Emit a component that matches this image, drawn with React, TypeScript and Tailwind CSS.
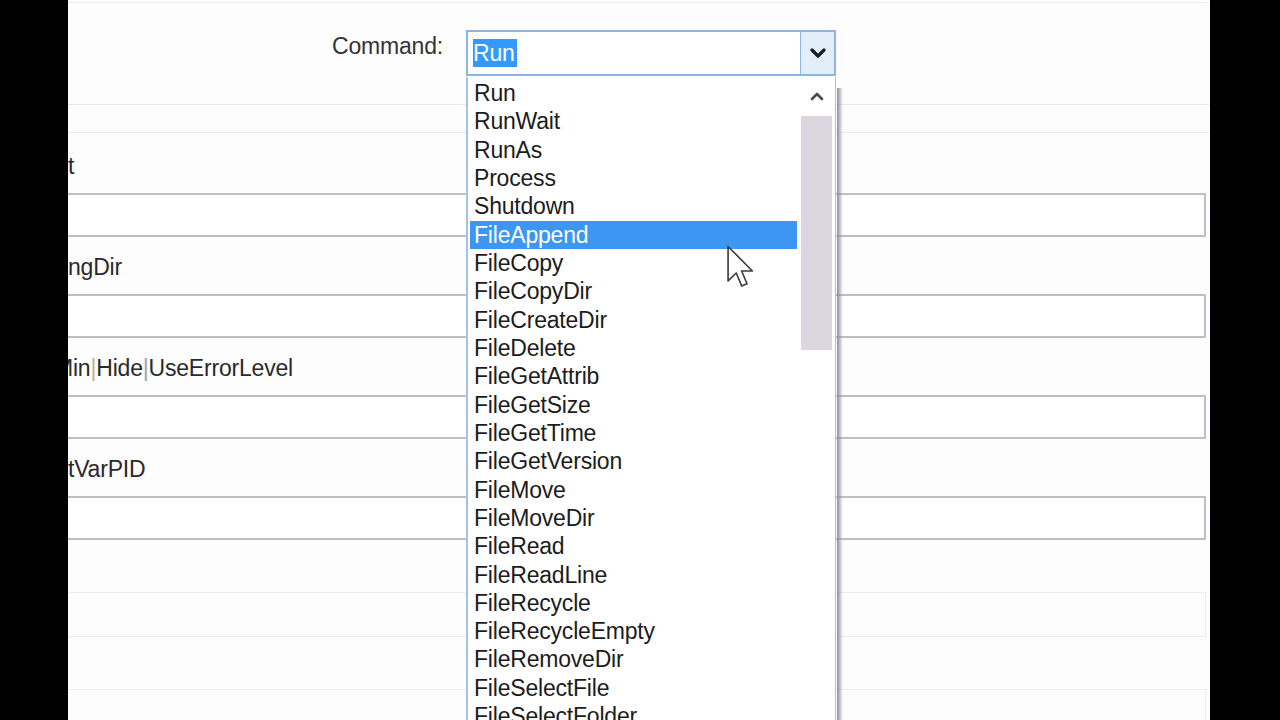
import React from 'react';

const COMMANDS = [
  'Run',
  'RunWait',
  'RunAs',
  'Process',
  'Shutdown',
  'FileAppend',
  'FileCopy',
  'FileCopyDir',
  'FileCreateDir',
  'FileDelete',
  'FileGetAttrib',
  'FileGetSize',
  'FileGetTime',
  'FileGetVersion',
  'FileMove',
  'FileMoveDir',
  'FileRead',
  'FileReadLine',
  'FileRecycle',
  'FileRecycleEmpty',
  'FileRemoveDir',
  'FileSelectFile',
  'FileSelectFolder',
  'FileSetAttrib',
];

const SELECTED = 'FileAppend';

// parameter rows behind the dropdown, left side is cut off by the frame
const ParamRow: React.FC<{ label: React.ReactNode; faint?: boolean }> = ({ label, faint }) => (
  <div className="flex flex-col shrink-0">
    <div className={`flex items-center pt-[3px] text-[23px] text-[#2a2a2a] tracking-[-0.2px] whitespace-nowrap shrink-0 ${faint ? 'h-[52px]' : 'h-[57px]'}`}>
      {label}
    </div>
    {faint ? (
      <div className="h-[45px] shrink-0 -ml-1 mr-1 border border-[#efe9f1]" />
    ) : (
      <div className="h-[44px] shrink-0 -ml-1 mr-1 border-2 border-[#c1bdc6] bg-white" />
    )}
  </div>
);

const ChevronDown = () => (
  <svg width="16" height="11" viewBox="0 0 16 11">
    <path d="M2 2 L8 8 L14 2" fill="none" stroke="#1b1b1f" strokeWidth="3.2" strokeLinecap="round" strokeLinejoin="round" />
  </svg>
);

const ChevronUp = () => (
  <svg width="14" height="9" viewBox="0 0 14 9">
    <path d="M2 7 L7 2 L12 7" fill="none" stroke="#4a4a50" strokeWidth="2.6" strokeLinecap="round" strokeLinejoin="round" />
  </svg>
);

const Cursor = () => (
  <svg width="28" height="46" viewBox="0 0 13 21" className="absolute left-[659px] top-[245px]">
    <path
      d="M0.5 0.5 L0.5 16.5 L4.3 12.8 L6.8 18.8 L9.3 17.8 L6.8 11.9 L11.8 11.9 Z"
      fill="#ffffff"
      stroke="#3c3c3c"
      strokeWidth="0.75"
      strokeLinejoin="round"
    />
  </svg>
);

const App: React.FC = () => {
  return (
    <div className="w-[1280px] h-[720px] bg-black flex overflow-hidden font-['Liberation_Sans',Arial,sans-serif]">
      <div className="ml-[68px] w-[1142px] h-full bg-[#fefdfe] relative overflow-hidden">
        <div className="h-[2px]" />
        <div className="border-t border-[#f2e9f2]" />

        {/* command row */}
        <div className="flex items-start pt-[27px]">
          <div className="w-[375px] text-right text-[23px] leading-[32px] text-[#333] tracking-[-0.2px]">Command:</div>
          <div className="ml-[23px] w-[370px] h-[46px] border-2 border-[#8db5e2] bg-white flex">
            <div className="flex-1 flex items-center pl-[5px]">
              <span className="bg-[#3399ff] text-white text-[23px] leading-[28px] pr-[2px] tracking-[-0.2px]">Run</span>
            </div>
            <div className="w-[34px] bg-[#e2eef9] border-l border-[#8db5e2] flex items-center justify-center">
              <ChevronDown />
            </div>
          </div>
        </div>

        <div className="h-[28px]" />
        <div className="border-t border-[#ebe6ee]" />
        <div className="h-[28px] border-b border-[#ebe6ee]" />
        <div className="h-[3px]" />

        <ParamRow label={<span>t</span>} />
        <ParamRow label={<span>ngDir</span>} />
        <ParamRow
          label={
            <span className="-ml-[14px]">
              Min<span className="text-[#c2b487]">|</span>Hide<span className="text-[#93a3bb]">|</span>UseErrorLevel
            </span>
          }
        />
        <ParamRow label={<span>tVarPID</span>} />
        <ParamRow label={null} faint />
        <ParamRow label={null} faint />

        {/* open dropdown list */}
        <div className="absolute left-[398px] top-[77px] w-[370px] h-[660px] bg-white border-l-2 border-r border-[#a3c3e6]">
          <div className="flex flex-col ml-[2px] w-[327px] pt-[2px]">
            {COMMANDS.map((cmd) => (
              <div
                key={cmd}
                className={`h-[28.33px] shrink-0 flex items-center pl-[4px] text-[23px] tracking-[-0.2px] whitespace-nowrap ${
                  cmd === SELECTED ? 'bg-[#3d96f2] text-white' : 'text-[#1c1c1c]'
                }`}
              >
                {cmd}
              </div>
            ))}
          </div>
          <div className="absolute left-[332px] top-0 w-[33px] h-full flex flex-col">
            <div className="h-[39px] shrink-0 flex items-center justify-center">
              <ChevronUp />
            </div>
            <div className="h-[234px] shrink-0 mx-[1px] bg-[#dbd6df]" />
          </div>
        </div>
        <div className="absolute left-[769px] top-[88px] w-[6px] h-[640px] bg-gradient-to-r from-[#8e8c9c] to-transparent" />

        <Cursor />
      </div>
    </div>
  );
};

export default App;
